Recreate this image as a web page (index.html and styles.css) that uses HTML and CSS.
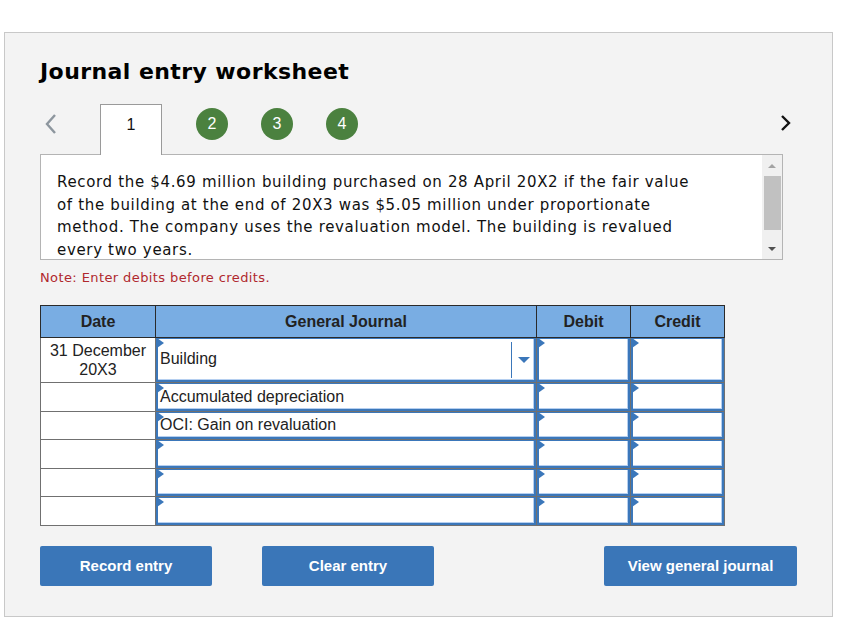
FILE: index.html
```html
<!DOCTYPE html>
<html lang="en">
<head>
  <meta charset="UTF-8">
  <title>Journal entry worksheet</title>
  <link rel="stylesheet" href="styles.css">
</head>
<body>
  <div class="panel">
    <h1>Journal entry worksheet</h1>

    <!-- Step tabs -->
    <div class="tabs">
      <span class="nav prev">
        <svg width="14" height="22" viewBox="0 0 14 22"><path d="M11 2 L3 11 L11 20" fill="none" stroke="#8d969e" stroke-width="2.4"/></svg>
      </span>
      <div class="tab active">1</div>
      <span class="step">2</span>
      <span class="step">3</span>
      <span class="step">4</span>
      <span class="nav next">
        <svg width="12" height="18" viewBox="0 0 12 18"><path d="M2 2 L9 9 L2 16" fill="none" stroke="#111" stroke-width="2.4"/></svg>
      </span>
    </div>

    <!-- Problem text -->
    <div class="question">
      <div class="question-text">
        Record the $4.69 million building purchased on 28 April 20X2 if the fair value<br>
        of the building at the end of 20X3 was $5.05 million under proportionate<br>
        method. The company uses the revaluation model. The building is revalued<br>
        every two years.
      </div>
      <div class="scrollbar">
        <span class="arrow up"></span>
        <span class="thumb"></span>
        <span class="arrow down"></span>
      </div>
    </div>

    <p class="note">Note: Enter debits before credits.</p>

    <!-- Journal table -->
    <table class="journal">
      <thead>
        <tr>
          <th class="col-date">Date</th>
          <th class="col-account">General Journal</th>
          <th class="col-amount">Debit</th>
          <th class="col-amount">Credit</th>
        </tr>
      </thead>
      <tbody>
        <tr class="first">
          <td class="date">31 December<br>20X3</td>
          <td><div class="field select"><span class="value">Building</span><span class="drop"></span></div></td>
          <td><div class="field"></div></td>
          <td><div class="field"></div></td>
        </tr>
        <tr>
          <td></td>
          <td><div class="field"><span class="value">Accumulated depreciation</span></div></td>
          <td><div class="field"></div></td>
          <td><div class="field"></div></td>
        </tr>
        <tr>
          <td></td>
          <td><div class="field"><span class="value">OCI: Gain on revaluation</span></div></td>
          <td><div class="field"></div></td>
          <td><div class="field"></div></td>
        </tr>
        <tr>
          <td></td>
          <td><div class="field"></div></td>
          <td><div class="field"></div></td>
          <td><div class="field"></div></td>
        </tr>
        <tr>
          <td></td>
          <td><div class="field"></div></td>
          <td><div class="field"></div></td>
          <td><div class="field"></div></td>
        </tr>
        <tr>
          <td></td>
          <td><div class="field"></div></td>
          <td><div class="field"></div></td>
          <td><div class="field"></div></td>
        </tr>
      </tbody>
    </table>

    <div class="actions">
      <button class="btn">Record entry</button>
      <button class="btn btn-clear">Clear entry</button>
      <button class="btn btn-view">View general journal</button>
    </div>
  </div>
</body>
</html>
```

FILE: styles.css
```css
body {
  margin: 0;
  padding: 32px 0 0 4px;
  background: #fff;
  font-family: "DejaVu Sans", Verdana, sans-serif;
  color: #111;
}

.panel {
  width: 792px;
  height: 559px;
  padding: 24px 0 0 35px;
  background: #f3f3f3;
  border: 1px solid #c8c8c8;
}

h1 {
  margin: 0;
  font-size: 22px;
  line-height: 30px;
  font-weight: bold;
  letter-spacing: 0.42px;
  color: #000;
}

/* tabs */
.tabs {
  display: flex;
  align-items: center;
  height: 51px;
  margin-top: 17px;
  margin-bottom: -1px;
  position: relative;
  z-index: 1;
}

.nav {
  display: flex;
  align-items: center;
}

.prev {
  margin-left: 4px;
  width: 56px;
  margin-top: -12px;
}

.next {
  margin-left: auto;
  margin-right: 40px;
  margin-top: -13px;
}

.tab {
  width: 62px;
  height: 51px;
  box-sizing: border-box;
  background: #fff;
  border: 1px solid #9a9a9a;
  border-bottom: none;
  font-family: "Liberation Sans", Arial, sans-serif;
  font-size: 16px;
  text-align: center;
  padding-top: 11px;
  margin-right: 34px;
}

.step {
  width: 32px;
  height: 32px;
  border-radius: 50%;
  background: #4b813f;
  color: #fff;
  font-family: "Liberation Sans", Arial, sans-serif;
  font-size: 16px;
  line-height: 32px;
  text-align: center;
  margin-right: 33px;
  margin-top: -12px;
}

/* question box */
.question {
  display: flex;
  width: 743px;
  height: 106px;
  box-sizing: border-box;
  background: #fff;
  border: 1px solid #b4b4b4;
}

.question-text {
  flex: 1;
  padding: 16px 0 0 16px;
  font-size: 15px;
  line-height: 22.5px;
  letter-spacing: 0.66px;
  white-space: nowrap;
  overflow: hidden;
}

.scrollbar {
  width: 20px;
  background: #f0f0f0;
  display: flex;
  flex-direction: column;
  align-items: center;
}

.arrow {
  width: 0;
  height: 0;
  border-left: 4px solid transparent;
  border-right: 4px solid transparent;
}

.arrow.up {
  border-bottom: 4px solid #a3a3a3;
  margin: 9px 0 8px;
}

.arrow.down {
  border-top: 4px solid #505050;
  margin-top: auto;
  margin-bottom: 8px;
}

.thumb {
  width: 17px;
  height: 54px;
  background: #c1c1c1;
}

.note {
  margin: 9px 0 0;
  font-size: 13px;
  line-height: 18px;
  letter-spacing: 0.4px;
  color: #b0282d;
}

/* journal table */
.journal {
  margin-top: 18px;
  border-collapse: collapse;
  font-family: "Liberation Sans", Arial, sans-serif;
  font-size: 16px;
  color: #222;
  background: #fff;
}

.journal th {
  height: 31px;
  padding: 0;
  background: #79ade3;
  border: 1px solid #2a2a2a;
  font-weight: bold;
  text-align: center;
}

.col-date { width: 114px; }
.col-account { width: 380px; }
.col-amount { width: 93px; }

.journal td {
  padding: 0;
  border: 1px solid #707070;
  vertical-align: top;
}

.journal td.date {
  text-align: center;
  line-height: 19px;
  padding-top: 3px;
}

.field {
  position: relative;
  display: flex;
  align-items: center;
  height: 27.6px;
  box-sizing: border-box;
  border: 2px solid #3b77ba;
  border-top-width: 1px;
  box-shadow: inset -1px -1px 0 #b5cff0;
}

.first .field {
  height: 44px;
}

.field::before {
  content: "";
  position: absolute;
  left: -1px;
  top: -1px;
  border-left: 7px solid #3b77ba;
  border-top: 5px solid transparent;
  border-bottom: 5px solid transparent;
}

.value {
  padding-left: 2px;
  padding-top: 1px;
}

.select .value {
  margin-top: -2px;
}

.select .drop {
  margin-left: auto;
  width: 22px;
  height: 36px;
  border-left: 1px solid #3b77ba;
  display: flex;
  align-items: center;
  justify-content: center;
}

.select .drop::after {
  content: "";
  border-top: 6px solid #3b77ba;
  border-left: 6px solid transparent;
  border-right: 6px solid transparent;
  margin-left: 2px;
}

/* buttons */
.actions {
  display: flex;
  margin-top: 20px;
}

.btn {
  width: 172px;
  height: 40px;
  border: none;
  border-radius: 2px;
  background: #3a76b8;
  color: #fff;
  font-family: "Liberation Sans", Arial, sans-serif;
  font-size: 15px;
  font-weight: bold;
  cursor: pointer;
}

.btn-clear {
  margin-left: 50px;
}

.btn-view {
  width: 193px;
  margin-left: 170px;
}
```
